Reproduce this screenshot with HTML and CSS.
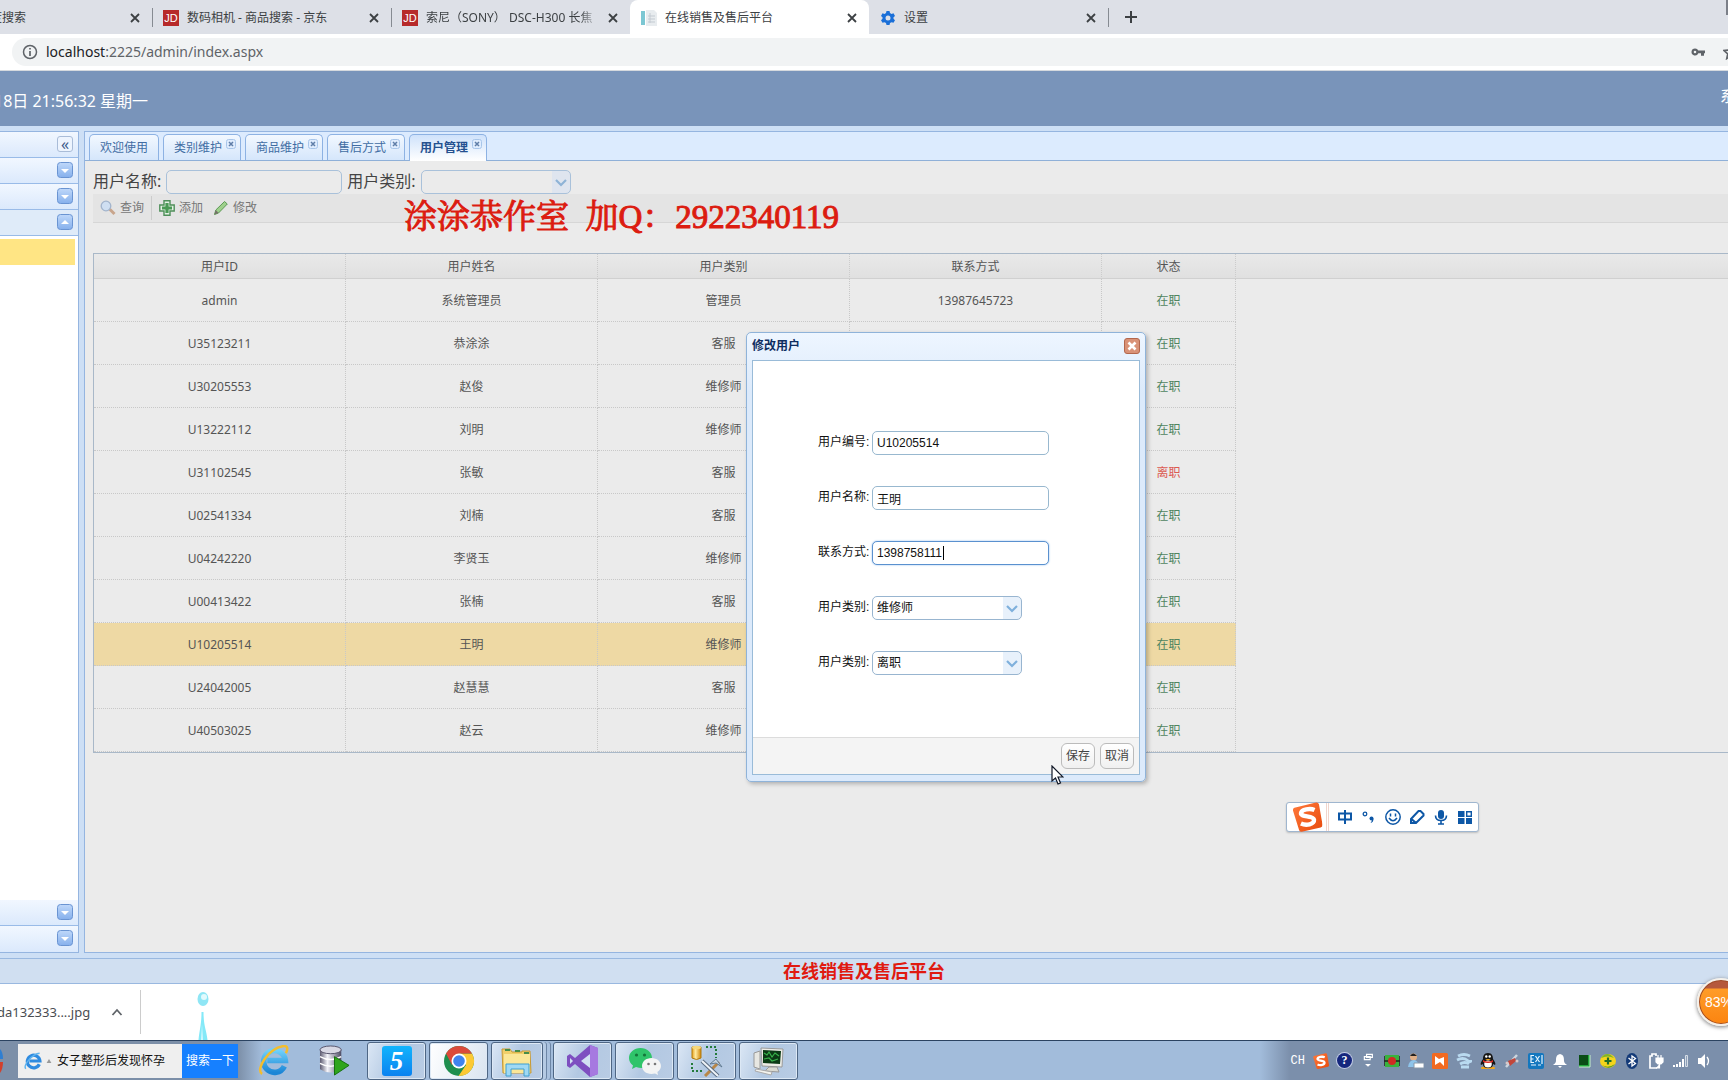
FILE: index.html
```html
<!DOCTYPE html>
<html lang="zh-CN">
<head>
<meta charset="utf-8">
<title>在线销售及售后平台</title>
<link rel="stylesheet" href="styles.css">
</head>
<body>
<svg class="defs" aria-hidden="true">
  <defs>
    <linearGradient id="g-tool" x1="0" y1="0" x2="0" y2="1"><stop offset="0" stop-color="#bfd8fa"/><stop offset="1" stop-color="#86b0ec"/></linearGradient>
    <linearGradient id="g-ie" x1="0" y1="0" x2="0" y2="1"><stop offset="0" stop-color="#6fd0fa"/><stop offset="1" stop-color="#1c86d6"/></linearGradient>
    <linearGradient id="g-db" x1="0" y1="0" x2="1" y2="0"><stop offset="0" stop-color="#5c5a70"/><stop offset=".35" stop-color="#f4f4fa"/><stop offset="1" stop-color="#4d4b63"/></linearGradient>
    <linearGradient id="g-gold" x1="0" y1="0" x2="1" y2="0"><stop offset="0" stop-color="#e8a21c"/><stop offset=".4" stop-color="#ffeaa0"/><stop offset="1" stop-color="#d08404"/></linearGradient>
    <linearGradient id="g-sogou" x1="0" y1="0" x2="1" y2="1"><stop offset="0" stop-color="#ff7a3c"/><stop offset="1" stop-color="#e84a0c"/></linearGradient>
    <symbol id="i-x" viewBox="0 0 10 10"><path d="M1 1l8 8M9 1l-8 8" stroke="#3c4043" stroke-width="1.8" fill="none"/></symbol>
    <symbol id="i-down" viewBox="0 0 16 16"><rect x=".5" y=".5" width="15" height="15" rx="3" fill="url(#g-tool)" stroke="#6a94d2"/><path d="M4 7h8l-4 4z" fill="#fff"/></symbol>
    <symbol id="i-up" viewBox="0 0 16 16"><rect x=".5" y=".5" width="15" height="15" rx="3" fill="url(#g-tool)" stroke="#6a94d2"/><path d="M4 10h8l-4-4z" fill="#fff"/></symbol>
    <symbol id="i-tabx" viewBox="0 0 10 10"><rect x=".5" y=".5" width="9" height="9" rx="2" fill="#dfecfd" stroke="#a8c6ea"/><path d="M3 3l4 4M7 3l-4 4" stroke="#5f7ea8" stroke-width="1.5"/></symbol>
    <symbol id="i-sogou" viewBox="0 0 32 32"><path d="M2 6L25 0.500q2.500-.4 3.200 2L32 24q.3 2.600-2 3.300L10 31.800q-2.400.2-3-2L.5 9q-.4-2.300 1.500-3z" fill="url(#g-sogou)"/><path d="M23.500 8.500C19 6.500 9.500 7.500 9 12c-.4 4.500 13.500 2 14 7 .4 5-8.500 6.500-14 4" fill="none" stroke="#fff" stroke-width="4.600"/></symbol>
    <symbol id="i-ie" viewBox="0 0 30 30"><path d="M25.500 20.500a10.500 10.500 0 1 1 1-5.500H9" fill="none" stroke="url(#g-ie)" stroke-width="5.400"/><path d="M4 28C-3 24 10 3 25 1c4-.3 4 3 2 7" fill="none" stroke="#f3bd2e" stroke-width="2.400"/></symbol>
  </defs>
</svg>

<div class="screen">
  <nav class="tabstrip" aria-label="浏览器标签">
    <div class="btab btab-first"><span class="btab-text">度搜索</span><button class="bclose" aria-label="关闭"><svg><use href="#i-x"/></svg></button></div>
    <div class="btab divided"><span class="jd">JD</span><span class="btab-text">数码相机 - 商品搜索 - 京东</span><button class="bclose" aria-label="关闭"><svg><use href="#i-x"/></svg></button></div>
    <div class="btab divided"><span class="jd">JD</span><span class="btab-text fade">索尼（SONY） DSC-H300 长焦</span><button class="bclose" aria-label="关闭"><svg><use href="#i-x"/></svg></button></div>
    <div class="btab active">
      <svg class="fav" viewBox="0 0 16 16"><path d="M0 1h4v14H0z" fill="#7cc7d3"/><path d="M5 0h8l3 3v13H5z" fill="#e8ecef"/><path d="M7 6h7M7 9h7M7 12h7M9 3v10" stroke="#c3cad1"/></svg>
      <span class="btab-text">在线销售及售后平台</span><button class="bclose" aria-label="关闭"><svg><use href="#i-x"/></svg></button></div>
    <div class="btab">
      <svg class="fav" viewBox="0 0 16 16"><path d="M6.500 1h3l.5 2 1.500.900 2-.6 1.500 2.600-1.500 1.400v1.500l1.500 1.400-1.500 2.600-2-.6-1.500.9-.5 2h-3l-.5-2-1.500-.9-2 .6L1 10.200l1.500-1.400V7.300L1 5.900l1.500-2.600 2 .6L6 3z" fill="#1a6fd8"/><circle cx="8" cy="8" r="2.500" fill="#dde0e7"/></svg>
      <span class="btab-text">设置</span><button class="bclose" aria-label="关闭"><svg><use href="#i-x"/></svg></button></div>
    <button class="newtab" aria-label="新标签页"><svg viewBox="0 0 12 12"><path d="M6 0v12M0 6h12" stroke="#3c4043" stroke-width="2"/></svg></button>
    <span class="winctl"></span>
  </nav>

  <div class="addressbar">
    <div class="omnibox">
      <svg class="info" viewBox="0 0 16 16"><circle cx="8" cy="8" r="6.500" fill="none" stroke="#5f6368" stroke-width="1.500"/><path d="M8 7v5M8 4v1.600" stroke="#5f6368" stroke-width="1.700"/></svg>
      <span class="url"><b>localhost</b>:2225/admin/index.aspx</span>
      <svg class="key" viewBox="0 0 16 12"><path d="M5 2.500a3.500 3.500 0 1 0 3.300 4.700H11v2.500h3V7.200h1V4.500H8.300A3.500 3.500 0 0 0 5 2.500zm0 2.200a1.300 1.300 0 1 1 0 2.600 1.300 1.300 0 0 1 0-2.600z" fill="#5f6368"/></svg>
      <svg class="star" viewBox="0 0 16 16"><path d="M8 1.500l2 4.500 5 .5-3.700 3.300 1 4.900L8 12.200l-4.300 2.500 1-4.900L1 6.500 6 6z" fill="none" stroke="#5f6368" stroke-width="1.600"/></svg>
    </div>
  </div>

  <header class="banner"><span class="clock">18日 21:56:32 星期一</span><span class="who">系</span></header>

  <div class="work">
    <aside class="side">
      <div class="side-row side-title"><button class="collapse" aria-label="收起">«</button></div>
      <div class="side-row"><svg><use href="#i-down"/></svg></div>
      <div class="side-row"><svg><use href="#i-down"/></svg></div>
      <div class="side-row open"><svg><use href="#i-up"/></svg></div>
      <div class="side-body"><div class="side-sel"></div></div>
      <div class="side-row"><svg><use href="#i-down"/></svg></div>
      <div class="side-row"><svg><use href="#i-down"/></svg></div>
    </aside>

    <main class="main">
      <div class="tabs">
        <button class="tab plain">欢迎使用</button>
        <button class="tab">类别维护<svg><use href="#i-tabx"/></svg></button>
        <button class="tab">商品维护<svg><use href="#i-tabx"/></svg></button>
        <button class="tab">售后方式<svg><use href="#i-tabx"/></svg></button>
        <button class="tab current">用户管理<svg><use href="#i-tabx"/></svg></button>
      </div>
      <section class="panel">
        <form class="filter">
          <label for="q-name">用户名称:</label><input id="q-name" type="text">
          <label for="q-type">用户类别:</label>
          <span class="combo"><select id="q-type"><option></option></select><svg viewBox="0 0 12 8"><path d="M1 1l5 5 5-5" fill="none" stroke="#8fb3d6" stroke-width="2.200"/></svg></span>
        </form>
        <div class="tools">
          <button class="tool"><svg viewBox="0 0 16 16"><path d="M9.500 9l5 5" stroke="#c8a58c" stroke-width="3"/><circle cx="6" cy="6" r="4.800" fill="#cfdff2" stroke="#a2b4cc" stroke-width="1.300"/></svg>查询</button>
          <span class="tool-sep"></span>
          <button class="tool"><svg viewBox="0 0 16 16"><path d="M5 .8h6V5h4.200v6H11v4.200H5V11H.8V5H5z" fill="#e4f1e4" stroke="#4f8f5a" stroke-width="1.400"/><path d="M8 3v10M3 8h10" stroke="#4a9a55" stroke-width="3.200"/></svg>添加</button>
          <button class="tool edit"><svg viewBox="0 0 16 16"><path d="M1.500 14.500l1.300-4.500L11.500 1.500l2.800 2.500L5.500 13z" fill="#9ed08c" stroke="#5c9a55"/><path d="M1.500 14.500l1.300-4.500 2.700 3z" fill="#77706a"/></svg>修改</button>
        </div>
        <div class="grid">
          <table>
            <colgroup><col class="c-wide"><col class="c-wide"><col class="c-wide"><col class="c-wide"><col class="c-state"><col></colgroup>
            <thead><tr><th>用户ID</th><th>用户姓名</th><th>用户类别</th><th>联系方式</th><th>状态</th><th></th></tr></thead>
            <tbody>
              <tr><td>admin</td><td>系统管理员</td><td>管理员</td><td>13987645723</td><td class="on">在职</td><td></td></tr>
              <tr><td>U35123211</td><td>恭涂涂</td><td>客服</td><td></td><td class="on">在职</td><td></td></tr>
              <tr><td>U30205553</td><td>赵俊</td><td>维修师</td><td></td><td class="on">在职</td><td></td></tr>
              <tr><td>U13222112</td><td>刘明</td><td>维修师</td><td></td><td class="on">在职</td><td></td></tr>
              <tr><td>U31102545</td><td>张敏</td><td>客服</td><td></td><td class="off">离职</td><td></td></tr>
              <tr><td>U02541334</td><td>刘楠</td><td>客服</td><td></td><td class="on">在职</td><td></td></tr>
              <tr><td>U04242220</td><td>李贤玉</td><td>维修师</td><td></td><td class="on">在职</td><td></td></tr>
              <tr><td>U00413422</td><td>张楠</td><td>客服</td><td></td><td class="on">在职</td><td></td></tr>
              <tr class="picked"><td>U10205514</td><td>王明</td><td>维修师</td><td></td><td class="on">在职</td><td></td></tr>
              <tr><td>U24042005</td><td>赵慧慧</td><td>客服</td><td></td><td class="on">在职</td><td></td></tr>
              <tr><td>U40503025</td><td>赵云</td><td>维修师</td><td></td><td class="on">在职</td><td></td></tr>
            </tbody>
          </table>
        </div>
        <p class="mark">涂涂恭作室&nbsp; 加Q：2922340119</p>

        <div class="dialog" role="dialog" aria-labelledby="dlg-title">
          <div class="dlg-head"><h2 id="dlg-title">修改用户</h2><button class="dlg-close" aria-label="关闭"><svg viewBox="0 0 16 16"><path d="M4 4l8 8M12 4l-8 8" stroke="#fff" stroke-width="3"/></svg></button></div>
          <form class="dlg-body">
            <div class="fields">
              <div class="field"><label for="f-id">用户编号:</label><input id="f-id" type="text" value="U10205514"></div>
              <div class="field"><label for="f-name">用户名称:</label><input id="f-name" type="text" value="王明"></div>
              <div class="field"><label for="f-tel">联系方式:</label><span class="focus"><input id="f-tel" type="text" value="1398758111"><i class="caret"></i></span></div>
              <div class="field"><label for="f-type">用户类别:</label><span class="combo"><select id="f-type"><option>维修师</option></select><svg viewBox="0 0 12 8"><path d="M1 1l5 5 5-5" fill="none" stroke="#7fb0dc" stroke-width="2.200"/></svg></span></div>
              <div class="field"><label for="f-state">用户类别:</label><span class="combo"><select id="f-state"><option>离职</option></select><svg viewBox="0 0 12 8"><path d="M1 1l5 5 5-5" fill="none" stroke="#7fb0dc" stroke-width="2.200"/></svg></span></div>
            </div>
            <div class="dlg-foot"><button type="button">保存</button><button type="button">取消</button></div>
          </form>
          <svg class="pointer" viewBox="0 0 13 20"><path d="M1 1v15l3.500-3 2.500 6 2.500-1-2.500-6H12z" fill="#fff" stroke="#111827" stroke-width="1.200"/></svg>
        </div>
      </section>
    </main>
  </div>

  <footer class="south">在线销售及售后平台</footer>

  <div class="downloads">
    <span class="file">da132333....jpg</span>
    <svg class="chev" viewBox="0 0 12 8"><path d="M1.500 7L6 2l4.500 5" fill="none" stroke="#5f6368" stroke-width="1.800"/></svg>
    <span class="dl-sep"></span>
    <svg class="drop" viewBox="0 0 16 48"><ellipse cx="8" cy="7" rx="5.500" ry="7" fill="#8fe6f5"/><ellipse cx="9" cy="5" rx="3" ry="3" fill="#e2fafd"/><path d="M6.500 20c0 12-2 18-3 28h9c-1-10-4-14-4-28z" fill="#84e9f8"/><path d="M7 32l-1 16h2z" fill="#d5f8fd"/></svg>
  </div>

  <div class="taskbar">
    <svg class="orb" viewBox="0 0 4 26"><path d="M0 1q3 3 3 10H0z" fill="#2f7fd2"/><path d="M0 14h3q0 7-3 11z" fill="#d2402c"/></svg>
    <div class="seek">
      <svg class="seek-ie" viewBox="0 0 30 30"><path d="M25.500 20.500a10.500 10.500 0 1 1 1-5.500H9" fill="none" stroke="#2f8be0" stroke-width="5.400"/><path d="M3 28C-2 22 14 3 26 2" fill="none" stroke="#5fb4ee" stroke-width="2.400"/></svg>
      <svg class="seek-tri" viewBox="0 0 6 5"><path d="M0 5l3-5 3 5z" fill="#999"/></svg>
      <input type="text" aria-label="搜索" value="女子整形后发现怀孕"><button>搜索一下</button>
    </div>
    <button class="pin" aria-label="Internet Explorer"><svg viewBox="0 0 30 30"><use href="#i-ie"/></svg></button>
    <button class="pin" aria-label="数据库"><svg viewBox="0 0 32 32"><path d="M1 5v20q11 7 22 0V5z" fill="url(#g-db)"/><ellipse cx="12" cy="5" rx="11" ry="4" fill="#d8d8e4" stroke="#55536a"/><path d="M1 12q11 6 22 0M1 19q11 6 22 0" fill="none" stroke="#fff" stroke-width="1.500"/><path d="M16 12l15 9-15 10z" fill="#2fa51c" stroke="#14700b"/></svg></button>
    <div class="tasks">
      <button class="task" aria-label="5"><span class="five">5</span></button>
      <button class="task lit" aria-label="Chrome"><svg viewBox="0 0 32 32"><circle cx="16" cy="16" r="15" fill="#1e8e4e"/><path d="M23 20L15.500 31A15 15 0 0 0 29 8.500H16z" fill="#fcc934"/><path d="M9 20L3 8.500A15 15 0 0 1 29 8.500H16z" fill="#db4a3a"/><circle cx="16" cy="16" r="7.500" fill="#fff"/><circle cx="16" cy="16" r="5.800" fill="#3f83ee"/></svg></button>
      <button class="task stack" aria-label="文件夹"><svg viewBox="0 0 32 32"><path d="M1 4h8l2 3h10V6h8l1 22H2z" fill="#f1cf69" stroke="#c79a35"/><path d="M3 9h26v19H3z" fill="#fbe798"/><path d="M4 5h5M14 6h5M23 8h5" stroke="#478d49" stroke-width="2"/><path d="M5 31V19h23v12h-5v-7H10v7z" fill="#9fd9f4" stroke="#3e9fd0"/></svg></button>
      <button class="task" aria-label="Visual Studio"><svg viewBox="0 0 32 32"><path d="M23 0l8 3v26l-8 3L8 19l-5 4-3-2V11l3-2 5 4z" fill="#7e4fc0"/><path d="M23 0l8 3v26l-8 3z" fill="#a679e0"/><path d="M23 9v14l-9-7z" fill="#d2e0f2"/><path d="M3 13v6l3-3z" fill="#d2e0f2"/></svg></button>
      <button class="task" aria-label="微信"><svg viewBox="0 0 32 32"><path d="M11.500 3C5 3 0 7.500 0 13c0 3 1.600 5.600 4 7.500L3 24l4-2c10 3 16-2 16-9 0-5.500-5-10-11.500-10z" fill="#2fc46a"/><circle cx="7.500" cy="10" r="1.600" fill="#14763a"/><circle cx="15.500" cy="10" r="1.600" fill="#14763a"/><path d="M22.500 13c-5.500 0-9.500 3.600-9.500 8s4 8 9.500 8l3.500-.5 3 1.500-.6-3C30.700 25.500 32 23.400 32 21c0-4.400-4-8-9.500-8z" fill="#f3f4f4"/><circle cx="19.500" cy="19" r="1.300" fill="#777"/><circle cx="26" cy="19" r="1.300" fill="#777"/></svg></button>
      <button class="task" aria-label="工具"><svg viewBox="0 0 32 32"><path d="M1 2v11q4.500 3 9 0V2z" fill="url(#g-gold)" stroke="#b07a10"/><ellipse cx="5.500" cy="2.500" rx="4.500" ry="1.800" fill="#f7d879"/><path d="M15 2h10v11M1 18v8h11" fill="none" stroke="#237a3a" stroke-width="2" stroke-dasharray="2 2"/><path d="M14 31l14-14" stroke="#b88748" stroke-width="3"/><path d="M11 16l16 15" stroke="#596b80" stroke-width="4"/><path d="M11 16l16 15" stroke="#eef3f8" stroke-width="2"/><path d="M19 19l6-5 6 8-3-2-3-2z" fill="#c5d4e2" stroke="#607a92"/></svg></button>
      <button class="task" aria-label="监视器"><svg viewBox="0 0 32 32"><path d="M1 8l6-2v18l-6-2z" fill="#e7e7e2" stroke="#999"/><path d="M8 3l22 1-1 18-20-1z" fill="#ecece6" stroke="#999"/><path d="M10 5l18 1-1 13-17-1z" fill="#0c3a16"/><path d="M11 8l3 2 2-3 3 5 3-4 4 3M11 14l5-1 3 3 6-2" fill="none" stroke="#38b24a" stroke-width="1.200"/><path d="M16 22h8l2 5-14-1z" fill="#dadad2" stroke="#999"/><path d="M3 24l16 3-1 3-16-4z" fill="#f3f3ee" stroke="#aaa"/></svg></button>
    </div>
    <div class="tray">
      <span class="lang">CH</span>
      <svg class="ti" viewBox="0 0 32 32"><use href="#i-sogou"/></svg>
      <span class="help">?</span>
      <svg class="ti" viewBox="0 0 16 22"><path d="M6 2h8v4H6zM3 5h8v4H3z" fill="#7b8fab" stroke="#fff" stroke-width="1.600"/><path d="M4 15h8l-4 4z" fill="#fff"/></svg>
      <svg class="ti" viewBox="0 0 16 16"><path d="M1 2h14v12H1z" fill="#39b23e"/><path d="M0 3v10M16 3v10M0 8h16" stroke="#222" stroke-width="1.500"/><circle cx="8" cy="8" r="4" fill="#d02a24"/></svg>
      <svg class="ti" viewBox="0 0 16 16"><circle cx="5.500" cy="4" r="3.500" fill="#e0b088"/><path d="M2 3q3-5 7 0z" fill="#222"/><path d="M0 14q1-7 6-7 4 0 5 7z" fill="#8ec4ea"/><path d="M6 10h10v5H6z" fill="#fff" stroke="#8899aa"/></svg>
      <svg class="ti" viewBox="0 0 16 16"><rect width="16" height="16" rx="1.500" fill="#f26a21"/><path d="M3 3l4 3 5-2v9l-4-4-5 3z" fill="#fff"/></svg>
      <svg class="ti" viewBox="0 0 16 16"><path d="M2 3q6-3 12 0M1 7q6-3 10 0t4 0M4 11q5-3 9 0M5 14h8" fill="none" stroke="#b9daf0" stroke-width="2.800"/></svg>
      <svg class="ti" viewBox="0 0 16 16"><ellipse cx="4.500" cy="15" rx="3.500" ry="1.500" fill="#f0a51c"/><ellipse cx="11.500" cy="15" rx="3.500" ry="1.500" fill="#f0a51c"/><path d="M8 0c4 0 5 3 5 6 2 3 3 5 2 6l-2-1c0 3-2 4-5 4s-5-1-5-4l-2 1c-1-1 0-3 2-6 0-3 1-6 5-6z" fill="#161616"/><ellipse cx="8" cy="11" rx="3.800" ry="3.600" fill="#fff"/><path d="M3 7q5 3 10 0v2q-5 2-10 0z" fill="#d92a20"/><circle cx="6.300" cy="3.500" r="1.200" fill="#fff"/><circle cx="9.700" cy="3.500" r="1.200" fill="#fff"/><path d="M5 6h6l-3 1.500z" fill="#f0a51c"/></svg>
      <svg class="ti" viewBox="0 0 16 16"><path d="M2 14L13 2" stroke="#ccd5de" stroke-width="2.500"/><path d="M4 8l7-3 1 3-6 5z" fill="#c2463a"/><circle cx="13" cy="8" r="1.500" fill="#d8c8c8"/><circle cx="3" cy="10" r="1.500" fill="#d8c8c8"/></svg>
      <svg class="ti" viewBox="0 0 16 16"><rect width="16" height="16" rx="2" fill="#1477be"/><path d="M6 2.500H3v7h3M3 6h2.500M7.500 3l4 6M11.500 3l-4 6M3 12h5M10 12h3M14 2v9" fill="none" stroke="#e8f6ff" stroke-width="1.200"/></svg>
      <svg class="ti" viewBox="0 0 16 16"><path d="M8 1c4 1 4 4 4 7 0 2 2 3 3 4H1c1-1 3-2 3-4 0-3 0-6 4-7zM6 13h4l-2 2z" fill="#fff"/></svg>
      <svg class="ti" viewBox="0 0 16 16"><path d="M3 2h11v12H3z" fill="#1fa53a"/><path d="M3 2h9v10H3z" fill="#0a4d16"/><path d="M3 14h11V2" fill="none" stroke="#c8f0cc"/></svg>
      <svg class="ti" viewBox="0 0 16 16"><ellipse cx="8" cy="8" rx="8" ry="7" fill="#f4d41c"/><path d="M1 5Q7-3 14 5q-6-3-13 0z" fill="#7fb52a"/><path d="M2 12q6 4 13-1-6 7-13 1z" fill="#4c9a28"/><path d="M8 4.500v7M4.500 8h7" stroke="#1e6e28" stroke-width="2.200"/></svg>
      <svg class="ti" viewBox="0 0 16 16"><ellipse cx="8" cy="8" rx="6" ry="8" fill="#143a78"/><path d="M4.500 5l7 5.500L8 13V3l3.500 2.500-7 5.500" fill="none" stroke="#fff" stroke-width="1.300"/></svg>
      <svg class="ti" viewBox="0 0 16 16"><path d="M8 3V1H4v2H2v12h7" fill="none" stroke="#fff" stroke-width="1.700"/><path d="M8 5h7v4l-2 2h-3L8 9zM10 5V2M13 5V2M11.500 11v4H8" fill="#fff" stroke="#fff" stroke-width="1.200"/></svg>
      <svg class="ti" viewBox="0 0 16 16"><path d="M1 14v-2h2v2zM4 14v-3h2v3zM7 14V9h2v5zM10 14V6h2v8z" fill="#fff"/><path d="M13.500 13.500v-11h2v11z" fill="#8fa0b8" stroke="#d5dde6"/></svg>
      <svg class="ti" viewBox="0 0 16 16"><path d="M2 5h3l4-4v14l-4-4H2z" fill="#fff"/><path d="M11 4q3 4 0 8" fill="none" stroke="#fff" stroke-width="1.300"/></svg>
    </div>
  </div>
</div>

<div class="ime" role="toolbar" aria-label="输入法">
  <svg class="ime-logo" viewBox="0 0 32 32"><use href="#i-sogou"/></svg>
  <span class="ime-sep"></span>
  <svg viewBox="0 0 16 16"><path d="M2 4.500h12v6H2zM8 1v14" fill="none" stroke="#0d57a6" stroke-width="2"/></svg>
  <svg viewBox="0 0 16 16"><circle cx="4" cy="5" r="1.800" fill="none" stroke="#0d57a6" stroke-width="1.300"/><circle cx="10.500" cy="9.500" r="2" fill="#0d57a6"/><path d="M12.500 9.500q0 4-3 4.500 1.500-2 1.500-3z" fill="#0d57a6"/></svg>
  <svg viewBox="0 0 16 16"><circle cx="8" cy="8" r="7.200" fill="none" stroke="#0d57a6" stroke-width="1.500"/><path d="M4 9q4 5.500 8 0M5.500 4.500v3M10.500 4.500v3" fill="none" stroke="#0d57a6" stroke-width="1.500"/></svg>
  <svg viewBox="0 0 16 16"><path d="M2 10l7.500-8h2L14.500 5v1.500L7 14H2zM2.500 10L7 14" fill="none" stroke="#0d57a6" stroke-width="2"/></svg>
  <svg viewBox="0 0 16 16"><rect x="5" y="1" width="6" height="9" rx="3" fill="#0d57a6"/><path d="M2.500 6.500q0 5 5.500 5t5.500-5M8 11v4M5 15h6" fill="none" stroke="#0d57a6" stroke-width="1.600"/></svg>
  <svg viewBox="0 0 16 16"><path d="M1 2h6.500v6H1zM1 9h6.500v6H1zM9 9h6v6H9z" fill="#0d57a6"/><path d="M9.700 2.700h4.600v4.600H9.700z" fill="none" stroke="#0d57a6" stroke-width="1.400"/></svg>
</div>
<div class="ball">83%</div>
</body>
</html>
```

FILE: styles.css
```css
* { box-sizing: border-box; }
html, body { margin: 0; height: 100%; }
body {
  overflow: hidden;
  font: 12px/16px "Noto Sans", "Noto Sans CJK SC", sans-serif;
  color: #222;
}
button, input, select { font: inherit; color: inherit; margin: 0; }
button { border: 0; background: none; padding: 0; }
svg { flex: none; display: block; }
.defs { position: absolute; width: 0; height: 0; }

.screen { display: flex; flex-direction: column; min-height: 100vh; }

/* browser tabs */
.tabstrip { display: flex; height: 34px; background: #dde0e7; overflow: hidden; }
.btab { position: relative; display: flex; align-items: center; gap: 8px; width: 239px; padding: 1px 12px 0 11px; flex: none; }
.btab-first { width: 152px; padding-left: 0; }
.btab-first .btab-text { margin-left: -10px; }
.divided::before { content: ""; position: absolute; left: 0; top: 8px; width: 1px; height: 19px; background: #868b92; }
.btab.active { background: #fff; border-radius: 8px 8px 0 0; }
.btab-text { flex: 1; color: #3c4043; white-space: nowrap; overflow: hidden; }
.fade { -webkit-mask-image: linear-gradient(90deg, #000 88%, transparent); mask-image: linear-gradient(90deg, #000 88%, transparent); }
.jd { width: 16px; height: 16px; background: #b72a2a; color: #fff; font: 11px/16px "Liberation Sans", sans-serif; text-align: center; }
.fav { width: 16px; height: 16px; }
.bclose svg { width: 10px; height: 10px; }
.newtab { position: relative; width: 46px; display: flex; align-items: center; justify-content: center; }
.newtab::before { content: ""; position: absolute; left: 0; top: 8px; width: 1px; height: 19px; background: #868b92; }
.newtab svg { width: 12px; height: 12px; }
.winctl { width: 2px; height: 15px; margin-left: auto; background: #7b7f88; }

/* address bar */
.addressbar { height: 37px; padding: 4px 0 5px 12px; background: #fff; border-bottom: 1px solid #d5d9de; overflow: hidden; }
.omnibox { display: flex; align-items: center; height: 28px; padding-left: 10px; background: #f1f3f4; border-radius: 14px 0 0 14px; }
.info { width: 16px; height: 16px; margin-right: 8px; }
.url { flex: 1; font-size: 14px; color: #5f6368; }
.url b { font-weight: normal; color: #202124; }
.key { width: 16px; height: 12px; margin-right: 17px; }
.star { width: 16px; height: 16px; margin-right: -11px; }

/* banner */
.banner { display: flex; justify-content: space-between; height: 55px; padding-top: 18px; background: #7994ba; color: #fff; font-size: 16px; line-height: 24px; overflow: hidden; }
.clock { margin-left: -6px; }
.who { margin-right: -8px; line-height: 14px; }

/* work area */
.work { flex: 1; display: flex; gap: 5px; padding: 5px 0; background: #cddff5; }
.side { width: 79px; display: flex; flex-direction: column; border: 1px solid #95b5e0; border-left: 0; background: #fff; }
.side-row { display: flex; align-items: center; justify-content: flex-end; height: 26px; padding: 0 5px 2px 0; border-bottom: 1px solid #99bbe8; background: linear-gradient(#f1f7ff, #dbe9fc); }
.side-row svg { width: 16px; height: 16px; }
.side-row:last-child { border-bottom: 0; }
.open { background: #dfebf9; }
.collapse { width: 16px; height: 16px; border: 1px solid #a9bcd8; border-radius: 3px; background: #edf4fe; color: #3d5c8c; font-size: 16px; line-height: 12px; }
.side-body { flex: 1; padding: 3px 3px 0 0; }
.side-sel { height: 26px; background: #ffe584; }

.main { flex: 1; min-width: 0; display: flex; flex-direction: column; border: 1px solid #95b5e0; border-right: 0; }
.tabs { display: flex; align-items: flex-end; gap: 4px; height: 29px; padding-left: 4px; background: #dcebfe; border-bottom: 1px solid #8fb0d8; }
.tab { display: flex; gap: 4px; width: 78px; height: 26px; padding: 4px 3px 0 10px; border: 1px solid #8db2e3; border-bottom: 0; border-radius: 5px 5px 0 0; background: linear-gradient(#f2f8ff, #d5e6fb); color: #416da3; line-height: 18px; white-space: nowrap; }
.tab svg { width: 10px; height: 10px; }
.plain { width: 70px; }
.current { height: 27px; margin-bottom: -1px; background: linear-gradient(#cfe2fb, #fff); color: #24508f; font-weight: bold; }

.panel { position: relative; flex: 1; padding-left: 8px; background: #ebebeb; }
.filter { display: flex; align-items: center; gap: 5px; height: 33px; padding-top: 8px; font-size: 16px; line-height: 20px; color: #444; }
.filter label { padding-bottom: 2px; }
.filter input { width: 176px; height: 24px; border: 1px solid #a9c1da; border-radius: 5px; background: transparent; }
.combo { position: relative; display: flex; width: 150px; height: 24px; }
.combo select { appearance: none; width: 100%; border: 1px solid #98b5d0; border-radius: 5px; padding: 0 20px 0 4px; background: linear-gradient(90deg, transparent 130px, #e8f1fb 130px); font-size: 12px; }
.combo svg { position: absolute; right: 4px; top: 9px; width: 12px; height: 8px; }
.filter .combo select { border-color: #a9c1da; background: linear-gradient(90deg, transparent 130px, #dfe5ef 130px); }

.tools { display: flex; align-items: center; height: 29px; padding-left: 7px; gap: 7px; background: #e4e4e4; border-bottom: 1px solid #d6d6d6; color: #777; }
.tool { display: flex; align-items: center; gap: 4px; }
.tool svg { width: 16px; height: 16px; }
.edit { margin-left: 3px; }
.tool-sep { width: 1px; height: 24px; background: #ccc; }

.grid { margin-top: 30px; border: 1px solid #a9b8c8; border-right: 0; }
table { width: 100%; table-layout: fixed; border-collapse: separate; border-spacing: 0; color: #555; text-align: center; }
.c-wide { width: 252px; }
.c-state { width: 134px; }
th { height: 25px; padding: 2px 0 0; font-weight: normal; background: linear-gradient(#e9e9e9, #e0e0e0); border-bottom: 1px solid #d0d0d0; border-right: 1px dotted #ccc; }
td { height: 43px; padding: 2px 0 0; border-right: 1px dotted #c8c8c8; border-bottom: 1px dotted #c8c8c8; }
th:last-child, td:last-child { border-right: 0; }
td:last-child { border-bottom: 0; }
.on { color: #4f8560; }
.off { color: #dc5a52; }
.picked td:not(:last-child) { background: #eed9a4; }

.mark { position: absolute; left: 319px; top: 36px; margin: 0; font: 33px/40px "Liberation Serif", "Noto Serif CJK SC", "Noto Sans CJK SC", serif; color: #dc1c10; white-space: nowrap; -webkit-text-stroke: 1px #dc1c10; }

/* dialog */
.dialog { position: absolute; left: 661px; top: 171px; width: 400px; padding: 0 5px 6px; border: 1px solid #8fb3d9; border-radius: 5px; background: linear-gradient(#eef6ff, #dceafb 60px); box-shadow: 2px 2px 4px rgba(0, 0, 0, .25); color: #111; font-family: "Liberation Sans", "Noto Sans CJK SC", sans-serif; }
.dlg-head { display: flex; align-items: center; justify-content: space-between; height: 27px; padding-bottom: 2px; }
.dlg-head h2 { margin: 0; font-size: 12px; line-height: 16px; color: #0e2d5f; }
.dlg-close { width: 16px; height: 16px; border: 1px solid #b3674c; border-radius: 3px; background: #d99277; }
.dlg-close svg { width: 14px; height: 14px; }
.dlg-body { border: 1px solid #99bbd8; background: #fff; }
.fields { display: flex; flex-direction: column; gap: 31px; padding: 70px 0 62px 65px; }
.field { display: flex; align-items: center; gap: 3px; height: 24px; }
.field label { width: 51px; padding-bottom: 2px; white-space: nowrap; }
.field input { width: 177px; height: 24px; padding: 0 4px; border: 1px solid #98b8cf; border-radius: 5px; background: #fff; }
.focus { position: relative; display: flex; }
.field .focus input { border-color: #5a91cf; box-shadow: 0 0 2px #8ab8ea; }
.caret { position: absolute; left: 71px; top: 5px; width: 1px; height: 14px; background: #000; }
.dlg-foot { display: flex; justify-content: flex-end; gap: 5px; padding: 5px; border-top: 1px solid #dcdcdc; background: #f4f4f4; }
.dlg-foot button { width: 34px; height: 26px; border: 1px solid #bbb; border-radius: 6px; background: linear-gradient(#fff, #f0f0f0); color: #444; }
.pointer { position: absolute; left: 304px; top: 432px; width: 13px; height: 20px; }

.south { height: 26px; border: 1px solid #99b8e0; border-width: 1px 0; background: #d0dff1; color: #e01a10; font-weight: bold; font-size: 18px; line-height: 24px; text-align: center; }

/* download shelf */
.downloads { display: flex; align-items: center; height: 56px; background: #fff; }
.file { width: 114px; margin-left: -3px; font-size: 13px; color: #4a4d52; }
.chev { width: 12px; height: 8px; margin-right: 17px; }
.dl-sep { width: 1px; height: 44px; background: #ccc; }
.drop { width: 16px; height: 48px; margin: 8px 0 0 54px; }

/* task bar */
.taskbar { display: flex; align-items: center; height: 40px; border-top: 1px solid #2b4361; background: linear-gradient(90deg, #7c8fa8 238px, #a2bcdb 262px, #a2bcdb 1260px, #7b8fab 1290px); }
.orb { width: 4px; height: 26px; margin-right: 14px; }
.seek { display: flex; align-items: center; width: 220px; height: 34px; padding-left: 6px; background: #efefef; }
.seek-ie { width: 18px; height: 18px; margin-right: 4px; }
.seek-tri { width: 6px; height: 4px; margin-right: 4px; }
.seek input { flex: 1; min-width: 0; padding: 0 0 0 1px; border: 0; background: none; color: #111; }
.seek button { width: 56px; height: 34px; background: #1680ff; color: #fff; }
.pin { width: 58px; display: flex; justify-content: center; margin-left: 6px; }
.pin svg { width: 31px; height: 31px; }
.pin + .pin { margin-left: 3px; }
.tasks { display: flex; gap: 3px; margin-left: 4px; }
.task { display: flex; align-items: center; justify-content: center; width: 59px; height: 38px; border: 1px solid #4e6684; border-radius: 3px; background: linear-gradient(110deg, #dbe7f5, #b2c8e2 50%, #b9cce4); box-shadow: inset 0 0 0 1px #dce8f5; }
.task svg { width: 32px; height: 32px; }
.lit { background: linear-gradient(110deg, #fff, #d9e4f0); }
.stack { width: 52px; margin-right: 7px; box-shadow: inset 0 0 0 1px #dce8f5, 3px 0 0 #b5cae3, 4px 0 0 #6d86a6, 7px 0 0 #a9c1de, 8px 0 0 #6d86a6; }
.five { width: 30px; height: 30px; border-radius: 3px; background: linear-gradient(#12b4fc, #0a82f0); color: #fff; font: italic bold 27px/30px "Liberation Serif", serif; }
.tray { display: flex; align-items: center; gap: 8px; margin-left: auto; padding-right: 16px; }
.ti { width: 16px; height: 16px; }
.lang { color: #fff; font: 12px/16px "Liberation Mono", monospace; }
.help { width: 15px; height: 15px; border-radius: 50%; background: #15277e; box-shadow: 0 0 0 1px #c2cbe4; color: #fff; font: bold 12px/15px "Liberation Serif", serif; text-align: center; }

/* floating widgets */
.ime { position: absolute; right: 249px; bottom: 248px; display: flex; align-items: center; gap: 8px; height: 30px; padding: 0 5px; background: #fff; border: 1px solid #9fb6cf; border-radius: 3px; box-shadow: 0 1px 2px rgba(0, 0, 0, .2); }
.ime svg { width: 16px; height: 16px; }
.ime .ime-logo { width: 31px; height: 30px; margin-right: -5px; }
.ime-sep { width: 3px; height: 28px; border: 1px solid #f0d5cc; border-width: 0 1px; }
.ball { position: absolute; right: -17px; bottom: 54px; width: 48px; height: 48px; border: 2px solid #f4f0ea; border-radius: 50%; background: linear-gradient(#b5583c 8px, #ff9c28 9px, #fb8410); box-shadow: 0 1px 4px #777, inset 0 0 0 1px #9c4a28; color: #fff; font: 14px/44px "Liberation Sans", sans-serif; padding-left: 6px; }
```
